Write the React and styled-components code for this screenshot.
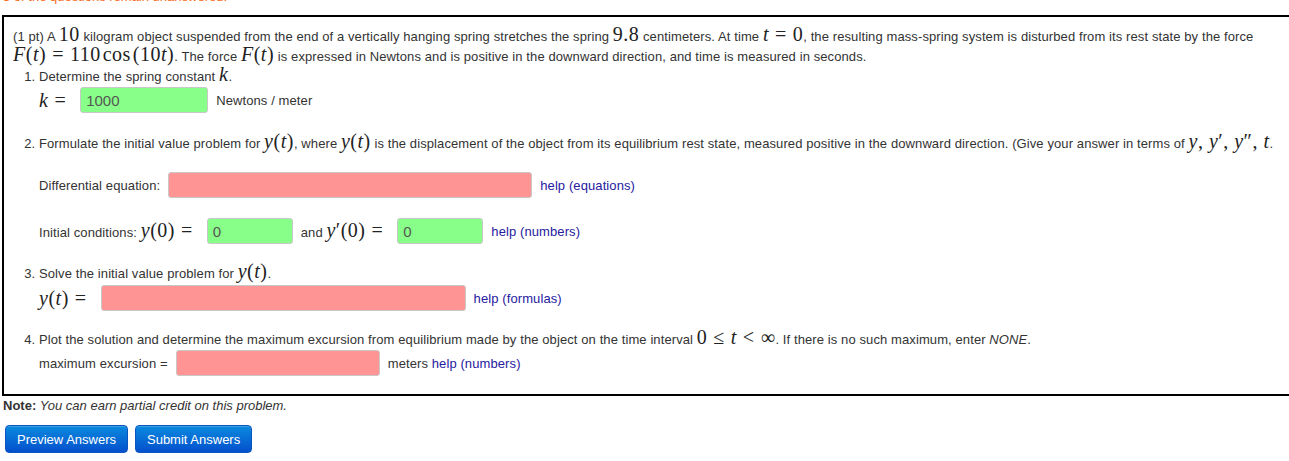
import React from 'react';
import styled, { createGlobalStyle } from 'styled-components';

const Global = createGlobalStyle`
  html, body { margin: 0; padding: 0; background: #fff; overflow: hidden; }
  body {
    font-family: "Liberation Sans", Arial, sans-serif;
    font-size: 13px;
    color: #333;
  }
`;

const Page = styled.div`
  padding-left: 2px;
  width: 1340px;
`;

const Unanswered = styled.div`
  color: #f76a1e;
  font-size: 13px;
  line-height: 14px;
  height: 14px;
  margin-top: -10px;
  margin-bottom: 11px;
  padding-left: 1px;
`;

const ProblemBox = styled.div`
  border: 2px solid #000;
  padding: 10px 0 18px 9px;
  width: 1320px;
  letter-spacing: 0.1px;
`;

const Intro = styled.div`
  line-height: 20px;
  white-space: nowrap;
`;

const Parts = styled.ol`
  margin: 0;
  padding-left: 26px;
`;

const Part = styled.li`
  margin-bottom: ${p => p.$mb || 0}px;
`;

const Line = styled.div`
  line-height: 20px;
  white-space: nowrap;
`;

const Row = styled.div`
  display: flex;
  align-items: center;
  gap: 8px;
  height: 26px;
  margin-top: ${p => p.$mt || 0}px;
  white-space: nowrap;
`;

const M = styled.span`
  font-family: "Liberation Serif", "Times New Roman", serif;
  font-size: 20px;
  line-height: 14px;
  letter-spacing: 0.5px;
  white-space: nowrap;
  color: #222;
`;

const V = styled.i`
  font-style: italic;
`;

const Op = styled.span`
  margin: 0 ${p => p.$sp ?? 6}px;
`;

const Answer = styled.input`
  box-sizing: border-box;
  width: ${p => p.$w}px;
  height: 26px;
  margin: 0;
  padding: 0 5px;
  border: 1px solid #c8c8c8;
  border-radius: 3px;
  background: ${p => (p.$ok ? '#88ff88' : '#ff9494')};
  font-family: "Liberation Sans", Arial, sans-serif;
  font-size: 15px;
  letter-spacing: 0;
  color: #555;
  outline: none;
`;

const Help = styled.a`
  color: #2620a0;
  text-decoration: none;
  cursor: pointer;
`;

const Note = styled.div`
  line-height: 20px;
  padding-left: 1px;
  b { font-weight: bold; }
  i { font-style: italic; }
`;

const ButtonBar = styled.div`
  display: flex;
  gap: 7px;
  margin: 9px 0 0 3px;
`;

const Button = styled.button`
  height: 28px;
  padding: 0 11px;
  border: 1px solid #0a55c0;
  border-radius: 4px;
  background: linear-gradient(#0a8ade, #0450cc);
  color: #fff;
  font-family: "Liberation Sans", Arial, sans-serif;
  font-size: 13px;
  cursor: pointer;
  box-shadow: inset 0 1px 0 rgba(255,255,255,0.2);
`;

const Fn = ({ f, arg }) => (
  <>
    <V>{f}</V>(<V>{arg}</V>)
  </>
);

export default function App() {
  return (
    <>
      <Global />
      <Page>
        <Unanswered>3 of the questions remain unanswered.</Unanswered>
        <ProblemBox>
          <Intro>
            (1 pt) A <M>10</M> kilogram object suspended from the end of a vertically hanging spring stretches the spring <M>9.8</M> centimeters. At time <M><V>t</V><Op>=</Op>0</M>, the resulting mass-spring system is disturbed from its rest state by the force
            <br />
            <M><Fn f="F" arg="t" /><Op>=</Op>110<Op $sp={2}>cos</Op>(10<V>t</V>)</M>. The force <M><Fn f="F" arg="t" /></M> is expressed in Newtons and is positive in the downward direction, and time is measured in seconds.
          </Intro>
          <Parts>
            <Part $mb={21}>
              <Line>Determine the spring constant <M><V>k</V></M>.</Line>
              <Row>
                <M><V>k</V><Op>=</Op></M>
                <Answer $w={128} $ok defaultValue="1000" />
                <span>Newtons / meter</span>
              </Row>
            </Part>
            <Part $mb={20}>
              <Line>
                Formulate the initial value problem for <M><Fn f="y" arg="t" /></M>, where <M><Fn f="y" arg="t" /></M> is the displacement of the object from its equilibrium rest state, measured positive in the downward direction. (Give your answer in terms of <M><V>y</V>, <V>y</V>′, <V>y</V>″, <V>t</V></M>.
              </Line>
              <Row $mt={18}>
                <span>Differential equation:</span>
                <Answer $w={364} />
                <Help>help (equations)</Help>
              </Row>
              <Row $mt={20}>
                <span>Initial conditions: <M><V>y</V>(0)<Op>=</Op></M></span>
                <Answer $w={86} $ok defaultValue="0" />
                <span>and <M><V>y</V>′(0)<Op>=</Op></M></span>
                <Answer $w={86} $ok defaultValue="0" />
                <Help>help (numbers)</Help>
              </Row>
            </Part>
            <Part $mb={19}>
              <Line>Solve the initial value problem for <M><Fn f="y" arg="t" /></M>.</Line>
              <Row $mt={1}>
                <M><Fn f="y" arg="t" /><Op>=</Op></M>
                <Answer $w={365} />
                <Help>help (formulas)</Help>
              </Row>
            </Part>
            <Part>
              <Line>
                Plot the solution and determine the maximum excursion from equilibrium made by the object on the time interval <M>0<Op>≤</Op><V>t</V><Op>&lt;</Op>∞</M>. If there is no such maximum, enter <i>NONE</i>.
              </Line>
              <Row>
                <span>maximum excursion =</span>
                <Answer $w={204} />
                <span>meters <Help>help (numbers)</Help></span>
              </Row>
            </Part>
          </Parts>
        </ProblemBox>
        <Note>
          <b>Note:</b> <i>You can earn partial credit on this problem.</i>
        </Note>
        <ButtonBar>
          <Button>Preview Answers</Button>
          <Button>Submit Answers</Button>
        </ButtonBar>
      </Page>
    </>
  );
}
